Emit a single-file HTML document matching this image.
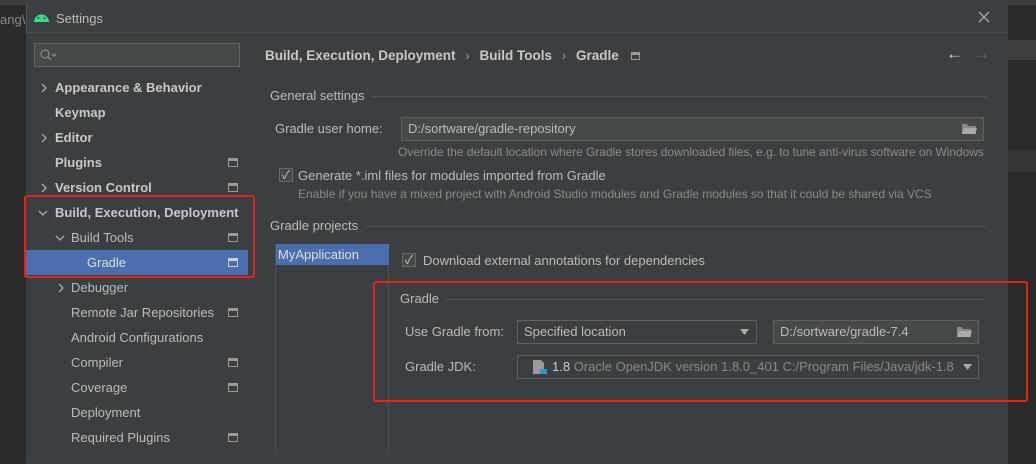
<!DOCTYPE html>
<html><head><style>
*{margin:0;padding:0;box-sizing:border-box}
body{width:1036px;height:451px;overflow:hidden;background:#2b2b2b;font-family:"Liberation Sans","Noto Sans CJK SC",sans-serif;font-size:13px;color:#bbbbbb;position:relative}
.a{position:absolute;white-space:nowrap}
.dlg{position:absolute;left:26px;top:4px;width:982px;height:460px;background:#3c3f41;border-left:1px solid #555}
.side{position:absolute;left:26px;top:33px;width:222px;height:430px;background:#3c3f41}
.row{position:absolute;left:26px;width:222px;height:25px;line-height:25px;font-size:13px}
.b{font-weight:bold;color:#c8c8c8}
.ic{position:absolute;right:10px;top:8px;width:10px;height:9px;border:1px solid #999;border-top-width:3px}
.inp{position:absolute;border:1px solid #5e6060;background:#45494a;height:24px;line-height:22px;padding-left:6px;color:#bbb}
.chk{position:absolute;width:14px;height:14px;border:1px solid #6b6b6b;background:#43494a;color:#ccc;font-size:12px;line-height:12px;text-align:center}
.hint{color:#8a8a8a;font-size:12px}
.line{position:absolute;height:1px;background:#515151}
.red{position:absolute;border:2.5px solid #e0251c;border-radius:3px}
.cr{position:absolute;top:8px}
</style></head><body>
<div class="a" style="left:0;top:0;width:1036px;height:5px;background:#3c3f41"></div>
<div class="a" style="left:0;top:12px;color:#888">ang\</div>
<div class="a" style="left:1008px;top:40px;width:28px;height:20px;background:#3c3f41"></div>
<div class="a" style="left:1008px;top:150px;width:28px;height:22px;background:#333537"></div>
<div class="dlg"></div>
<div class="line" style="left:26px;top:32px;width:982px;background:#4a4a4a"></div>
<svg class="a" style="left:33px;top:12px" width="17" height="10"><path d="M1 10 A7.5 7.5 0 0 1 16 10Z" fill="#3ddc84"/><circle cx="5.5" cy="6" r="1" fill="#3c3f41"/><circle cx="11.5" cy="6" r="1" fill="#3c3f41"/></svg>
<div class="a" style="left:56px;top:11px;font-size:13px;color:#bbb">Settings</div>
<svg class="a" style="left:978px;top:11px" width="12" height="12"><path d="M1 1L11 11M11 1L1 11" stroke="#aaa" stroke-width="1.3"/></svg>
<div class="side"></div>
<div class="inp" style="left:34px;top:43px;width:206px;height:24px;background:#45494a;border-color:#646464"></div>
<svg class="a" style="left:40px;top:49px" width="16" height="12"><circle cx="5" cy="5" r="4" stroke="#999" fill="none"/><path d="M8 8L11 11M12 5l2 2 2-2" stroke="#999" fill="none"/></svg>
<div class="row b" style="top:75px"><svg class="cr" style="left:14px" width="8" height="10"><path d="M2 1l4 4-4 4" stroke="#aaa" fill="none" stroke-width="1.3"/></svg><span class="a" style="left:29px">Appearance &amp; Behavior</span></div>
<div class="row b" style="top:100px"><span class="a" style="left:29px">Keymap</span></div>
<div class="row b" style="top:125px"><svg class="cr" style="left:14px" width="8" height="10"><path d="M2 1l4 4-4 4" stroke="#aaa" fill="none" stroke-width="1.3"/></svg><span class="a" style="left:29px">Editor</span></div>
<div class="row b" style="top:150px"><span class="a" style="left:29px">Plugins</span><i class="ic"></i></div>
<div class="row b" style="top:175px"><svg class="cr" style="left:14px" width="8" height="10"><path d="M2 1l4 4-4 4" stroke="#aaa" fill="none" stroke-width="1.3"/></svg><span class="a" style="left:29px">Version Control</span><i class="ic"></i></div>
<div class="row b" style="top:200px"><svg class="cr" style="left:12px;top:9px" width="10" height="8"><path d="M1 2l4 4 4-4" stroke="#aaa" fill="none" stroke-width="1.3"/></svg><span class="a" style="left:29px">Build, Execution, Deployment</span></div>
<div class="row" style="top:225px"><svg class="cr" style="left:29px;top:9px" width="10" height="8"><path d="M1 2l4 4 4-4" stroke="#aaa" fill="none" stroke-width="1.3"/></svg><span class="a" style="left:45px">Build Tools</span><i class="ic"></i></div>
<div class="row" style="top:250px;background:#4b6eaf;color:#ddd"><span class="a" style="left:61px">Gradle</span><i class="ic" style="border-color:#ccc"></i></div>
<div class="row" style="top:275px"><svg class="cr" style="left:31px" width="8" height="10"><path d="M2 1l4 4-4 4" stroke="#aaa" fill="none" stroke-width="1.3"/></svg><span class="a" style="left:45px">Debugger</span></div>
<div class="row" style="top:300px"><span class="a" style="left:45px">Remote Jar Repositories</span><i class="ic"></i></div>
<div class="row" style="top:325px"><span class="a" style="left:45px">Android Configurations</span></div>
<div class="row" style="top:350px"><span class="a" style="left:45px">Compiler</span><i class="ic"></i></div>
<div class="row" style="top:375px"><span class="a" style="left:45px">Coverage</span><i class="ic"></i></div>
<div class="row" style="top:400px"><span class="a" style="left:45px">Deployment</span></div>
<div class="row" style="top:425px"><span class="a" style="left:45px">Required Plugins</span><i class="ic"></i></div>
<div class="red" style="left:24px;top:195px;width:231px;height:83px"></div>

<div class="a b" style="left:265px;top:48px;font-size:13.5px">Build, Execution, Deployment <span style="color:#999;font-weight:normal;margin:0 6px">›</span> Build Tools <span style="color:#999;font-weight:normal;margin:0 6px">›</span> Gradle<i style="display:inline-block;margin-left:12px;width:9px;height:8px;border:1px solid #999;border-top-width:3px"></i></div>
<div class="a" style="left:946px;top:44px;font-size:17px;color:#ccc">←</div>
<div class="a" style="left:973px;top:44px;font-size:17px;color:#666">→</div>

<div class="a" style="left:270px;top:88px">General settings</div>
<div class="line" style="left:371px;top:96px;width:616px"></div>
<div class="a" style="left:275px;top:121px">Gradle user home:</div>
<div class="inp" style="left:401px;top:117px;width:583px">D:/sortware/gradle-repository</div>
<svg class="a" style="left:962px;top:123px" width="15" height="11"><path d="M0 1h5l1 2h8v8H0z" fill="#8a8a8a"/><path d="M2 5h13l-2 6H0z" fill="#aaa"/></svg>
<div class="a hint" style="left:398px;top:145px;letter-spacing:-0.04px">Override the default location where Gradle stores downloaded files, e.g. to tune anti-virus software on Windows</div>
<div class="chk" style="left:279px;top:168px">✓</div>
<div class="a" style="left:298px;top:168px">Generate *.iml files for modules imported from Gradle</div>
<div class="a hint" style="left:298px;top:187px">Enable if you have a mixed project with Android Studio modules and Gradle modules so that it could be shared via VCS</div>

<div class="a" style="left:270px;top:218px">Gradle projects</div>
<div class="line" style="left:365px;top:226px;width:622px"></div>
<div class="a" style="left:275px;top:244px;width:1px;height:210px;background:#515151"></div>
<div class="a" style="left:276px;top:244px;width:113px;height:210px;border-right:1px solid #515151"></div>
<div class="a" style="left:276px;top:244px;width:113px;height:21px;background:#4b6eaf;color:#ddd;line-height:21px;padding-left:2px">MyApplication</div>
<div class="chk" style="left:402px;top:253px">✓</div>
<div class="a" style="left:423px;top:253px">Download external annotations for dependencies</div>

<div class="a" style="left:400px;top:291px">Gradle</div>
<div class="line" style="left:445px;top:299px;width:541px"></div>
<div class="a" style="left:405px;top:324px">Use Gradle from:</div>
<div class="inp" style="left:517px;top:320px;width:240px;background:#3c3f41">Specified location</div>
<svg class="a" style="left:740px;top:329px" width="10" height="6"><path d="M0 0h9l-4.5 6z" fill="#aaa"/></svg>
<div class="inp" style="left:773px;top:320px;width:206px;background:#45494a;color:#bbb">D:/sortware/gradle-7.4</div>
<svg class="a" style="left:957px;top:326px" width="15" height="11"><path d="M0 1h5l1 2h8v8H0z" fill="#8a8a8a"/><path d="M2 5h13l-2 6H0z" fill="#aaa"/></svg>
<div class="a" style="left:405px;top:359px">Gradle JDK:</div>
<div class="inp" style="left:517px;top:355px;width:462px;background:#3c3f41;padding-left:34px"><span style="color:#ccc">1.8</span> <span style="color:#888">Oracle OpenJDK version 1.8.0_401 C:/Program Files/Java/jdk-1.8</span></div>
<svg class="a" style="left:532px;top:360px" width="16" height="15"><path d="M1 0h8l3 3v11H1z" fill="#9a9a9a"/><rect x="8" y="9" width="7" height="5" fill="#3592c4"/></svg>
<svg class="a" style="left:963px;top:364px" width="10" height="6"><path d="M0 0h9l-4.5 6z" fill="#aaa"/></svg>
<div class="red" style="left:373px;top:281px;width:655px;height:121px"></div>
</body></html>
